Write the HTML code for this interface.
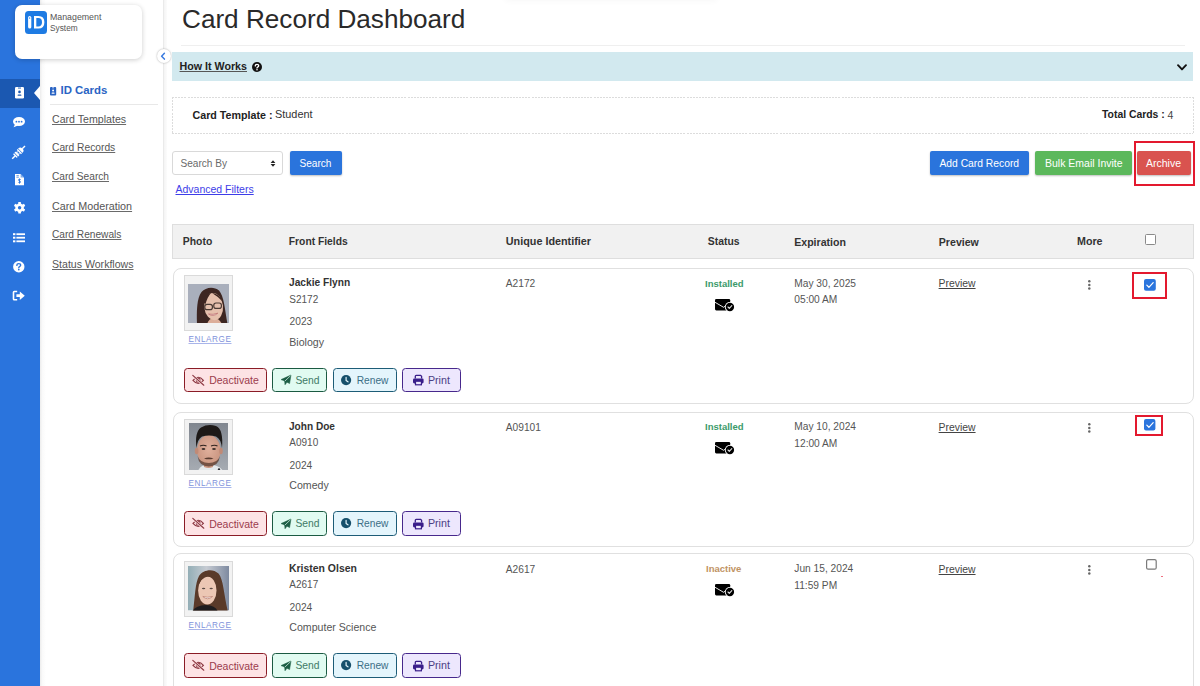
<!DOCTYPE html>
<html><head><meta charset="utf-8"><style>
*{box-sizing:border-box;margin:0;padding:0}
html,body{width:1200px;height:686px;overflow:hidden;background:#fff;font-family:"Liberation Sans",sans-serif;color:#333}
.a{position:absolute}
.t{position:absolute;line-height:1;white-space:nowrap;text-decoration-skip-ink:none}
svg{position:absolute;overflow:visible}
</style></head><body>
<div class="a" style="left:40px;top:0px;width:6px;height:686px;background:linear-gradient(90deg,#ececec,#fafafa 40%,#fff)"></div>
<div class="a" style="left:0px;top:0px;width:40px;height:686px;background:#2a74dd"></div>
<div class="a" style="left:0px;top:79px;width:40px;height:29px;background:#1b58b1"></div>
<div class="a" style="left:34px;top:86px;width:0;height:0;border-top:7px solid transparent;border-bottom:7px solid transparent;border-right:6px solid #fff"></div>
<svg style="left:14.8px;top:86.8px" width="9" height="11.5" viewBox="0 0 9 11.5"><rect x="0" y="0" width="9" height="11.5" rx="1.2" fill="#fff"/><rect x="3" y="0.6" width="3" height="0.9" fill="#1b58b1"/><circle cx="4.5" cy="4.9" r="1.3" fill="#1b58b1"/><rect x="2.6" y="7.4" width="3.8" height="1.4" rx="0.6" fill="#1b58b1"/></svg>
<svg style="left:13px;top:116.5px" width="12" height="10.5" viewBox="0 0 12 10.5"><ellipse cx="6" cy="4.5" rx="6" ry="4.5" fill="#fff"/><path d="M2.2 7 L0.6 10.3 L5 8.6Z" fill="#fff"/><circle cx="3.4" cy="4.7" r="0.9" fill="#2a74dd"/><circle cx="6" cy="4.7" r="0.9" fill="#2a74dd"/><circle cx="8.6" cy="4.7" r="0.9" fill="#2a74dd"/></svg>
<svg style="left:12.4px;top:144.8px" width="14" height="14" viewBox="0 0 14 14"><g transform="rotate(-45 7 7)"><rect x="-2.6" y="6.3" width="4" height="1.4" fill="#fff"/><rect x="1.2" y="4.4" width="4" height="5.2" rx="0.6" fill="#fff"/><rect x="2.6" y="4.4" width="0.7" height="5.2" fill="#2a74dd"/><rect x="5.2" y="5.3" width="1.2" height="1" fill="#fff"/><rect x="5.2" y="7.7" width="1.2" height="1" fill="#fff"/><path d="M6.8 4 H9.6 Q11.8 4 11.8 7 Q11.8 10 9.6 10 H6.8Z" fill="#fff"/><rect x="8.2" y="4" width="0.6" height="6" fill="#2a74dd"/><rect x="11.5" y="6.3" width="4" height="1.4" fill="#fff"/></g></svg>
<svg style="left:14.8px;top:174px" width="9" height="11.3" viewBox="0 0 9 11.3"><path d="M0 0 H5.6 L9 3.4 V11.3 H0Z" fill="#fff"/><path d="M5.6 0 V3.4 H9" fill="#2a74dd" opacity="0.6"/><rect x="1.4" y="1.4" width="2.4" height="0.7" fill="#2a74dd"/><rect x="1.4" y="2.8" width="2.4" height="0.7" fill="#2a74dd"/><path d="M5.7 5.6 Q4.5 5 3.6 5.6 Q3 6.3 4.3 6.9 Q5.8 7.4 5.5 8.3 Q4.8 9 3.4 8.4 M4.5 4.6 V9.6" fill="none" stroke="#2a74dd" stroke-width="0.9"/></svg>
<svg style="left:13.5px;top:202.4px" width="11.2" height="11.4" viewBox="0 0 11.2 11.4"><rect x="4.25" y="-0.1" width="2.7" height="3" rx="0.5" fill="#fff" transform="rotate(0 5.6 5.7)"/><rect x="4.25" y="-0.1" width="2.7" height="3" rx="0.5" fill="#fff" transform="rotate(60 5.6 5.7)"/><rect x="4.25" y="-0.1" width="2.7" height="3" rx="0.5" fill="#fff" transform="rotate(120 5.6 5.7)"/><rect x="4.25" y="-0.1" width="2.7" height="3" rx="0.5" fill="#fff" transform="rotate(180 5.6 5.7)"/><rect x="4.25" y="-0.1" width="2.7" height="3" rx="0.5" fill="#fff" transform="rotate(240 5.6 5.7)"/><rect x="4.25" y="-0.1" width="2.7" height="3" rx="0.5" fill="#fff" transform="rotate(300 5.6 5.7)"/><circle cx="5.6" cy="5.7" r="4.3" fill="#fff"/><circle cx="5.6" cy="5.7" r="1.7" fill="#2a74dd"/></svg>
<svg style="left:13px;top:233px" width="12" height="9.5" viewBox="0 0 12 9.5"><rect x="0" y="0.2" width="2.4" height="2" fill="#fff"/><rect x="0" y="3.7" width="2.4" height="2" fill="#fff"/><rect x="0" y="7.3" width="2.4" height="2" fill="#fff"/><rect x="3.4" y="0.3" width="8.6" height="1.8" fill="#fff"/><rect x="3.4" y="3.8" width="8.6" height="1.8" fill="#fff"/><rect x="3.4" y="7.4" width="8.6" height="1.8" fill="#fff"/></svg>
<svg style="left:13.2px;top:261px" width="11.6" height="11.4" viewBox="0 0 11.6 11.4"><circle cx="5.8" cy="5.7" r="5.7" fill="#fff"/><path d="M3.9 4.4 Q3.9 2.6 5.8 2.6 Q7.7 2.6 7.7 4.1 Q7.7 5.1 6.5 5.6 Q5.8 5.9 5.8 6.8" fill="none" stroke="#2a74dd" stroke-width="1.4" stroke-linecap="round"/><circle cx="5.8" cy="8.6" r="0.85" fill="#2a74dd"/></svg>
<svg style="left:13.2px;top:290.9px" width="11.8" height="9.3" viewBox="0 0 11.8 9.3"><path d="M4.2 0.5 H1.2 Q0.5 0.5 0.5 1.2 V8.1 Q0.5 8.8 1.2 8.8 H4.2" fill="none" stroke="#fff" stroke-width="1.6"/><path d="M3.4 3.2 H6.8 V0.4 L11.8 4.65 L6.8 8.9 V6.1 H3.4Z" fill="#fff"/></svg>
<div class="a" style="left:163px;top:0px;width:1px;height:686px;background:#eaeaea"></div>
<div class="a" style="left:164px;top:0px;width:3px;height:686px;background:linear-gradient(90deg,#f4f4f4,#fcfcfc)"></div>
<div class="a" style="left:14.5px;top:5px;width:127.8px;height:53.8px;background:#fff;border-radius:7px;box-shadow:0 1px 5px rgba(0,0,0,.2)"></div>
<div class="a" style="left:24.9px;top:11.4px;width:22.3px;height:22.5px;background:#1e7be3;border-radius:3.5px"></div>
<svg style="left:24.9px;top:11.4px" width="22.3" height="22.5" viewBox="0 0 22.3 22.5"><rect x="3.1" y="4.9" width="3.2" height="12.7" rx="1.6" fill="#fff"/><rect x="4.2" y="6.2" width="1" height="1.6" rx="0.5" fill="#1e7be3"/><path d="M9 4.9 H13.4 Q19.4 4.9 19.4 11.25 Q19.4 17.6 13.4 17.6 H9Z M11.3 7.1 V15.4 H13.3 Q17 15.4 17 11.25 Q17 7.1 13.3 7.1Z" fill="#fff" fill-rule="evenodd"/></svg>
<div class="t" style="left:50.00px;top:13.15px;font-size:8.8px;font-weight:400;color:#555;">Management</div>
<div class="t" style="left:50.00px;top:24.07px;font-size:8.3px;font-weight:400;color:#555;">System</div>
<div class="t" style="left:60.50px;top:85.15px;font-size:11.4px;font-weight:700;color:#2a64c4;">ID Cards</div>
<svg style="left:50px;top:86.5px" width="6.2" height="8.5" viewBox="0 0 6.2 8.5"><rect x="0" y="0" width="6.2" height="8.5" rx="0.9" fill="#2a64c4"/><rect x="2.1" y="0.5" width="2" height="0.7" fill="#fff"/><circle cx="3.1" cy="3.6" r="1" fill="#fff"/><rect x="1.6" y="5.5" width="3" height="1.3" rx="0.5" fill="#fff"/></svg>
<div class="a" style="left:50px;top:104px;width:108px;height:1px;background:#e8e8e8"></div>
<div class="t" style="left:52.00px;top:114.01px;font-size:10.62px;font-weight:400;color:#555;text-decoration:underline;text-decoration-color:#6a6a6a">Card Templates</div>
<div class="t" style="left:52.00px;top:143.32px;font-size:10.25px;font-weight:400;color:#555;text-decoration:underline;text-decoration-color:#6a6a6a">Card Records</div>
<div class="t" style="left:52.00px;top:172.39px;font-size:10.17px;font-weight:400;color:#555;text-decoration:underline;text-decoration-color:#6a6a6a">Card Search</div>
<div class="t" style="left:52.00px;top:200.89px;font-size:10.76px;font-weight:400;color:#555;text-decoration:underline;text-decoration-color:#6a6a6a">Card Moderation</div>
<div class="t" style="left:52.00px;top:230.39px;font-size:10.17px;font-weight:400;color:#555;text-decoration:underline;text-decoration-color:#6a6a6a">Card Renewals</div>
<div class="t" style="left:52.00px;top:259.04px;font-size:10.58px;font-weight:400;color:#555;text-decoration:underline;text-decoration-color:#6a6a6a">Status Workflows</div>
<div class="a" style="left:156.5px;top:49px;width:14px;height:14px;background:#fff;border-radius:50%;box-shadow:0 0 2px rgba(0,0,0,.35)"></div>
<svg style="left:159px;top:52px" width="8" height="8" viewBox="0 0 8 8"><path d="M5.4 1.3 L2.6 4.2 L5.4 7.1" fill="none" stroke="#3a7be0" stroke-width="1.5" stroke-linecap="round" stroke-linejoin="round"/></svg>
<div class="t" style="left:182.00px;top:5.86px;font-size:26.15px;font-weight:400;color:#2a2a2a;">Card Record Dashboard</div>
<div class="a" style="left:505px;top:-20px;width:212px;height:20px;box-shadow:0 1px 6px rgba(0,0,0,.035);background:#fff"></div>
<div class="a" style="left:181px;top:45px;width:1004px;height:1px;background:#efefef"></div>
<div class="a" style="left:172px;top:52px;width:1021px;height:29px;background:#d2e9ef"></div>
<div class="t" style="left:179.50px;top:60.94px;font-size:10.7px;font-weight:700;color:#222;text-decoration:underline;text-decoration-color:#555">How It Works</div>
<svg style="left:252px;top:61.5px" width="10" height="10" viewBox="0 0 10 10"><circle cx="5" cy="5" r="5" fill="#111"/><path d="M3.3 3.9 Q3.3 2.3 5 2.3 Q6.7 2.3 6.7 3.7 Q6.7 4.6 5.6 5.1 Q5 5.4 5 6.1" fill="none" stroke="#fff" stroke-width="1.3" stroke-linecap="round"/><circle cx="5" cy="7.8" r="0.8" fill="#fff"/></svg>
<svg style="left:1177px;top:64px" width="10" height="7" viewBox="0 0 10 7"><path d="M1 1.2 L5 5.4 L9 1.2" fill="none" stroke="#111" stroke-width="1.9" stroke-linecap="round" stroke-linejoin="round"/></svg>
<div class="a" style="left:172px;top:96.5px;width:1021px;height:1px;background:repeating-linear-gradient(90deg,#dcdcdc 0 2px,transparent 2px 3.1px)"></div>
<div class="a" style="left:172px;top:133.2px;width:1021px;height:1px;background:repeating-linear-gradient(90deg,#dcdcdc 0 2px,transparent 2px 3.1px)"></div>
<div class="a" style="left:172px;top:96.5px;width:1px;height:37.7px;background:repeating-linear-gradient(180deg,#dcdcdc 0 2px,transparent 2px 3.1px)"></div>
<div class="a" style="left:1192.5px;top:96.5px;width:1px;height:37.7px;background:repeating-linear-gradient(180deg,#dcdcdc 0 2px,transparent 2px 3.1px)"></div>
<div class="t" style="left:192.50px;top:109.64px;font-size:10.7px;font-weight:700;color:#222;">Card Template :</div>
<div class="t" style="left:275.00px;top:109.47px;font-size:10.9px;font-weight:400;color:#333;">Student</div>
<div class="t" style="left:1102.00px;top:109.90px;font-size:10.4px;font-weight:700;color:#222;">Total Cards :</div>
<div class="t" style="left:1167.50px;top:109.81px;font-size:10.5px;font-weight:400;color:#444;">4</div>
<div class="a" style="left:172px;top:151px;width:111px;height:24px;border:1px solid #d9d9d9;border-radius:3px;background:#fff"></div>
<div class="t" style="left:180.50px;top:159.25px;font-size:10.1px;font-weight:400;color:#6a6a6a;">Search By</div>
<svg style="left:270px;top:159.6px" width="6" height="7" viewBox="0 0 6 7"><path d="M0.6 2.9 L3 0.3 L5.4 2.9Z M0.6 4.1 L3 6.7 L5.4 4.1Z" fill="#222"/></svg>
<div class="a" style="left:290px;top:151px;width:51.5px;height:24px;background:#2a74dc;border-radius:2px;box-shadow:0 1px 2px rgba(0,0,0,.25)"></div>
<div class="t" style="left:299.50px;top:159.25px;font-size:10.1px;font-weight:400;color:#fff;">Search</div>
<div class="t" style="left:175.50px;top:184.31px;font-size:10.5px;font-weight:400;color:#3d3de8;text-decoration:underline">Advanced Filters</div>
<div class="a" style="left:930px;top:151px;width:99px;height:24px;background:#2a74dc;border-radius:2px;box-shadow:0 1px 2px rgba(0,0,0,.25)"></div>
<div class="t" style="left:939.50px;top:159.08px;font-size:10.3px;font-weight:400;color:#fff;">Add Card Record</div>
<div class="a" style="left:1035px;top:151px;width:97px;height:24px;background:#5cb85c;border-radius:2px;box-shadow:0 1px 2px rgba(0,0,0,.25)"></div>
<div class="t" style="left:1045.00px;top:158.11px;font-size:10.5px;font-weight:400;color:#fff;">Bulk Email Invite</div>
<div class="a" style="left:1137px;top:151px;width:54px;height:24px;background:#d9534f;border-radius:2px;box-shadow:0 1px 2px rgba(0,0,0,.25)"></div>
<div class="t" style="left:1146.00px;top:158.11px;font-size:10.5px;font-weight:400;color:#fff;">Archive</div>
<div class="a" style="left:1133.5px;top:141px;width:61.5px;height:44.5px;border:2px solid #e3192e"></div>
<div class="a" style="left:172.15px;top:224.3px;width:1021.85px;height:34.4px;background:#f1f1f1;border:1px solid #dedede"></div>
<div class="t" style="left:182.80px;top:236.70px;font-size:10.4px;font-weight:700;color:#333;">Photo</div>
<div class="t" style="left:288.80px;top:236.78px;font-size:10.3px;font-weight:700;color:#333;">Front Fields</div>
<div class="t" style="left:505.80px;top:236.36px;font-size:10.8px;font-weight:700;color:#333;">Unique Identifier</div>
<div class="t" style="left:707.80px;top:236.70px;font-size:10.4px;font-weight:700;color:#333;">Status</div>
<div class="t" style="left:794.20px;top:236.53px;font-size:10.6px;font-weight:700;color:#333;">Expiration</div>
<div class="t" style="left:938.80px;top:236.53px;font-size:10.6px;font-weight:700;color:#333;">Preview</div>
<div class="t" style="left:1077.00px;top:236.44px;font-size:10.7px;font-weight:700;color:#333;">More</div>
<div class="a" style="left:1144.7px;top:234px;width:11.6px;height:11.3px;border:1.1px solid #8a8a8a;border-radius:1.5px;background:#fff"></div>
<div class="a" style="left:173.06px;top:268.26px;width:1020.94px;height:135.84000000000003px;border:1px solid #e0e0e0;border-radius:8px;background:#fff"></div>
<div class="a" style="left:184px;top:275.3px;width:49px;height:56px;background:#f2f2f2;border:1px solid #dadada"></div>
<svg style="left:188px;top:283.8px" width="41" height="39" viewBox="0 0 41 39"><defs><filter id="bj" x="-10%" y="-10%" width="120%" height="120%"><feGaussianBlur stdDeviation="0.7"/></filter><clipPath id="cj"><rect width="41" height="39"/></clipPath></defs>
<g clip-path="url(#cj)">
<rect width="41" height="39" fill="#a9afbc"/>
<g filter="url(#bj)">
<path d="M9 40 C8.5 26 9 14 13.5 8 C17.5 3 26 2 31 6.5 C36 12 37 26 39.5 40 Z" fill="#3e2722"/>
<path d="M19 40 Q21 34 26 34 Q31 34 34 40Z" fill="#dcae9a"/>
<ellipse cx="25.6" cy="22.6" rx="9.4" ry="13.6" fill="#e6c0ad" transform="rotate(-6 25.6 22.6)"/>
<path d="M15.8 19 Q16 10.5 23 9 Q19.5 13 17.5 20Z" fill="#3e2722"/>
<path d="M24 9 Q31.5 9.5 34.5 17.5 Q30 12.5 24 9Z" fill="#3e2722"/>
<rect x="16.8" y="20.3" width="7.6" height="5.4" rx="2.2" fill="none" stroke="#4a3a34" stroke-width="1.2"/>
<rect x="25.8" y="19.0" width="7.6" height="5.4" rx="2.2" fill="none" stroke="#4a3a34" stroke-width="1.2"/>
<path d="M20.5 30 Q25 33.2 29.8 29.2 Q25 31 20.5 30Z" fill="#f6e6e4" stroke="#c07373" stroke-width="0.8"/>
</g></g></svg>
<div class="t" style="left:188.50px;top:336.26px;font-size:8.2px;font-weight:400;color:#8193db;text-decoration:underline;text-decoration-color:#a9b5ea;letter-spacing:0.55px">ENLARGE</div>
<div class="t" style="left:289.00px;top:278.37px;font-size:10.2px;font-weight:700;color:#333;">Jackie Flynn</div>
<div class="t" style="left:289.30px;top:294.54px;font-size:10.0px;font-weight:400;color:#555;">S2172</div>
<div class="t" style="left:289.60px;top:317.27px;font-size:10.2px;font-weight:400;color:#555;">2023</div>
<div class="t" style="left:289.30px;top:336.63px;font-size:10.6px;font-weight:400;color:#555;">Biology</div>
<div class="t" style="left:505.80px;top:279.27px;font-size:10.2px;font-weight:400;color:#555;">A2172</div>
<div class="t" style="left:705.00px;top:278.71px;font-size:9.5px;font-weight:700;color:#3c9b6b;">Installed</div>
<svg style="left:714.7px;top:298.7px" width="20" height="13" viewBox="0 0 20 13"><rect x="0" y="0" width="15.2" height="11.4" rx="1.3" fill="#000"/>
<path d="M-0.3 3.1 L8.6 8.3 L15.5 3.1" fill="none" stroke="#fff" stroke-width="0.9"/>
<circle cx="14.9" cy="8.0" r="5.1" fill="#fff"/>
<circle cx="14.9" cy="8.0" r="4.2" fill="#000"/>
<path d="M13.0 8.0 L14.3 9.3 L16.8 6.7" fill="none" stroke="#ddd" stroke-width="1.1" stroke-linecap="round" stroke-linejoin="round"/></svg>
<div class="t" style="left:794.30px;top:278.57px;font-size:10.2px;font-weight:400;color:#555;">May 30, 2025</div>
<div class="t" style="left:794.30px;top:295.07px;font-size:10.2px;font-weight:400;color:#555;">05:00 AM</div>
<div class="t" style="left:938.60px;top:279.40px;font-size:10.4px;font-weight:400;color:#444;text-decoration:underline">Preview</div>
<svg style="left:1087.7px;top:279.6px" width="2.6" height="9.8" viewBox="0 0 2.6 9.8"><circle cx="1.3" cy="1.3" r="1.25" fill="#666"/><circle cx="1.3" cy="4.9" r="1.25" fill="#666"/><circle cx="1.3" cy="8.5" r="1.25" fill="#666"/></svg>
<div class="a" style="left:183.75px;top:367.6px;width:83.2px;height:24.4px;background:#fde3e5;border:1.6px solid #8a1c26;border-radius:3.5px"></div>
<svg style="left:192px;top:374.5px" width="12.5" height="10.5" viewBox="0 0 12.5 10.5"><path d="M1 5.3 Q6.2 -0.8 11.4 5.3 Q6.2 11.4 1 5.3Z" fill="none" stroke="#8e3a44" stroke-width="1.2"/>
<circle cx="6.2" cy="5.3" r="1.9" fill="none" stroke="#8e3a44" stroke-width="1.1"/>
<path d="M0.8 0.6 L11.6 10" stroke="#fde3e5" stroke-width="2.4"/>
<path d="M0.8 0.4 L11.8 10.2" stroke="#8e3a44" stroke-width="1.2" stroke-linecap="round"/></svg>
<div class="t" style="left:209.20px;top:375.01px;font-size:10.5px;font-weight:400;color:#9b3b4c;">Deactivate</div>
<div class="a" style="left:272.25px;top:367.6px;width:54.7px;height:24.4px;background:#e1fbf1;border:1.6px solid #1b5a42;border-radius:3.5px"></div>
<svg style="left:280.6px;top:375px" width="10" height="10" viewBox="0 0 10 10"><path d="M10 0 L0 4.6 L3.6 6 L4 9.8 L6 7.2 L8.6 8.6Z M10 0 L3.6 6" fill="#1d5e45" stroke="#1d5e45" stroke-width="0.5" stroke-linejoin="round"/><path d="M9.6 0.6 L3.9 6.1" stroke="#e1fbf1" stroke-width="0.7"/></svg>
<div class="t" style="left:295.40px;top:375.78px;font-size:10.3px;font-weight:400;color:#3f7a66;">Send</div>
<div class="a" style="left:333.1px;top:367.6px;width:63.8px;height:24.4px;background:#e4f5fc;border:1.6px solid #1d5c77;border-radius:3.5px"></div>
<svg style="left:341px;top:374.8px" width="10.2" height="10.2" viewBox="0 0 10.2 10.2"><circle cx="5.1" cy="5.1" r="5.1" fill="#154f6b"/><path d="M5.1 2.4 V5.4 L7 6.8" fill="none" stroke="#e4f5fc" stroke-width="1.2" stroke-linecap="round" stroke-linejoin="round"/></svg>
<div class="t" style="left:356.70px;top:375.87px;font-size:10.2px;font-weight:400;color:#3b6e86;">Renew</div>
<div class="a" style="left:401.9px;top:367.6px;width:59.6px;height:24.4px;background:#ede7fd;border:1.6px solid #47288c;border-radius:3.5px"></div>
<svg style="left:412.5px;top:375px" width="10.6" height="10.3" viewBox="0 0 10.6 10.3"><path d="M2.3 3.6 V1.2 Q2.3 0.3 3.2 0.3 H7.6 L8.6 1.3 V3.6" fill="none" stroke="#3a1e8a" stroke-width="1.3"/>
<rect x="0" y="3.4" width="10.6" height="5" rx="1.3" fill="#3a1e8a"/>
<rect x="2.5" y="6.2" width="5.9" height="3.6" fill="#ede7fd" stroke="#3a1e8a" stroke-width="1.2"/></svg>
<div class="t" style="left:427.90px;top:374.84px;font-size:10.7px;font-weight:400;color:#4b3e84;">Print</div>
<div class="a" style="left:1132px;top:272.2px;width:34.7px;height:27.2px;border:2px solid #e3192e"></div>
<svg style="left:1143.8px;top:279.2px" width="11.8" height="11.8" viewBox="0 0 11.8 11.8"><rect x="0" y="0" width="11.8" height="11.8" rx="2" fill="#2b75dd"/><path d="M2.8 6.2 L4.9 8.3 L9.2 3.6" fill="none" stroke="#fff" stroke-width="1.2" stroke-linecap="round" stroke-linejoin="round"/></svg>
<div class="a" style="left:173.06px;top:412.35px;width:1020.94px;height:134.70999999999992px;border:1px solid #e0e0e0;border-radius:8px;background:#fff"></div>
<div class="a" style="left:184px;top:418.9px;width:49px;height:56px;background:#f2f2f2;border:1px solid #dadada"></div>
<svg style="left:189px;top:422.9px" width="39" height="47" viewBox="0 0 39 47"><defs><linearGradient id="gn" x1="0" y1="0" x2="0" y2="1"><stop offset="0" stop-color="#80868f"/><stop offset="1" stop-color="#a6abb2"/></linearGradient><radialGradient id="fn" cx="0.5" cy="0.45" r="0.6"><stop offset="0" stop-color="#e0b09c"/><stop offset="1" stop-color="#c8937e"/></radialGradient><clipPath id="cn"><rect width="39" height="47"/></clipPath></defs>
<g clip-path="url(#cn)">
<rect width="39" height="47" fill="url(#gn)"/>
<path d="M9 48 Q11 42 19.5 41.5 Q30 41.5 34 48Z" fill="#e4e8eb"/>
<path d="M15 44 Q19.5 46 24 44 L24 38 L15 38Z" fill="#c99580"/>
<ellipse cx="19.8" cy="27.5" rx="11.6" ry="15.5" fill="url(#fn)"/>
<ellipse cx="7.6" cy="28" rx="1.8" ry="3.2" fill="#c08a76"/><ellipse cx="32" cy="28" rx="1.8" ry="3.2" fill="#c08a76"/>
<path d="M7.5 25 Q5.5 9 12 4.5 Q19 0.5 27 3 Q34.5 6 33 25 Q32 16 27 13.5 Q20 11.5 13 13.5 Q8.5 16 7.5 25Z" fill="#1d1917"/>
<path d="M8.5 33 Q10 43.5 19.8 43.5 Q29.5 43.5 31 33 Q28.5 40 19.8 40 Q11 40 8.5 33Z" fill="#5e4034" opacity="0.8"/>
<path d="M15 35.5 Q19.8 33.5 24.5 35.5 Q19.8 37.2 15 35.5Z" fill="#5a3c30"/>
<ellipse cx="14.5" cy="26" rx="1.9" ry="0.9" fill="#3e302b"/><ellipse cx="25" cy="26" rx="1.9" ry="0.9" fill="#3e302b"/>
<path d="M11 23 Q14.5 21.5 17.5 23 M22 23 Q25.5 21.5 28.5 23" stroke="#2e221e" stroke-width="1.1" fill="none"/>
<circle cx="30" cy="46.5" r="1.2" fill="#2a2a30"/>
</g></svg>
<div class="t" style="left:188.50px;top:479.86px;font-size:8.2px;font-weight:400;color:#8193db;text-decoration:underline;text-decoration-color:#a9b5ea;letter-spacing:0.55px">ENLARGE</div>
<div class="t" style="left:289.00px;top:422.05px;font-size:10.1px;font-weight:700;color:#333;">John Doe</div>
<div class="t" style="left:289.30px;top:438.14px;font-size:10.0px;font-weight:400;color:#555;">A0910</div>
<div class="t" style="left:289.60px;top:460.87px;font-size:10.2px;font-weight:400;color:#555;">2024</div>
<div class="t" style="left:289.30px;top:480.23px;font-size:10.6px;font-weight:400;color:#555;">Comedy</div>
<div class="t" style="left:505.80px;top:422.87px;font-size:10.2px;font-weight:400;color:#555;">A09101</div>
<div class="t" style="left:705.00px;top:422.31px;font-size:9.5px;font-weight:700;color:#3c9b6b;">Installed</div>
<svg style="left:714.7px;top:442.29999999999995px" width="20" height="13" viewBox="0 0 20 13"><rect x="0" y="0" width="15.2" height="11.4" rx="1.3" fill="#000"/>
<path d="M-0.3 3.1 L8.6 8.3 L15.5 3.1" fill="none" stroke="#fff" stroke-width="0.9"/>
<circle cx="14.9" cy="8.0" r="5.1" fill="#fff"/>
<circle cx="14.9" cy="8.0" r="4.2" fill="#000"/>
<path d="M13.0 8.0 L14.3 9.3 L16.8 6.7" fill="none" stroke="#ddd" stroke-width="1.1" stroke-linecap="round" stroke-linejoin="round"/></svg>
<div class="t" style="left:794.30px;top:422.17px;font-size:10.2px;font-weight:400;color:#555;">May 10, 2024</div>
<div class="t" style="left:794.30px;top:438.67px;font-size:10.2px;font-weight:400;color:#555;">12:00 AM</div>
<div class="t" style="left:938.60px;top:423.00px;font-size:10.4px;font-weight:400;color:#444;text-decoration:underline">Preview</div>
<svg style="left:1087.7px;top:423.20000000000005px" width="2.6" height="9.8" viewBox="0 0 2.6 9.8"><circle cx="1.3" cy="1.3" r="1.25" fill="#666"/><circle cx="1.3" cy="4.9" r="1.25" fill="#666"/><circle cx="1.3" cy="8.5" r="1.25" fill="#666"/></svg>
<div class="a" style="left:183.75px;top:511.20000000000005px;width:83.2px;height:24.4px;background:#fde3e5;border:1.6px solid #8a1c26;border-radius:3.5px"></div>
<svg style="left:192px;top:518.1px" width="12.5" height="10.5" viewBox="0 0 12.5 10.5"><path d="M1 5.3 Q6.2 -0.8 11.4 5.3 Q6.2 11.4 1 5.3Z" fill="none" stroke="#8e3a44" stroke-width="1.2"/>
<circle cx="6.2" cy="5.3" r="1.9" fill="none" stroke="#8e3a44" stroke-width="1.1"/>
<path d="M0.8 0.6 L11.6 10" stroke="#fde3e5" stroke-width="2.4"/>
<path d="M0.8 0.4 L11.8 10.2" stroke="#8e3a44" stroke-width="1.2" stroke-linecap="round"/></svg>
<div class="t" style="left:209.20px;top:518.61px;font-size:10.5px;font-weight:400;color:#9b3b4c;">Deactivate</div>
<div class="a" style="left:272.25px;top:511.20000000000005px;width:54.7px;height:24.4px;background:#e1fbf1;border:1.6px solid #1b5a42;border-radius:3.5px"></div>
<svg style="left:280.6px;top:518.6px" width="10" height="10" viewBox="0 0 10 10"><path d="M10 0 L0 4.6 L3.6 6 L4 9.8 L6 7.2 L8.6 8.6Z M10 0 L3.6 6" fill="#1d5e45" stroke="#1d5e45" stroke-width="0.5" stroke-linejoin="round"/><path d="M9.6 0.6 L3.9 6.1" stroke="#e1fbf1" stroke-width="0.7"/></svg>
<div class="t" style="left:295.40px;top:519.38px;font-size:10.3px;font-weight:400;color:#3f7a66;">Send</div>
<div class="a" style="left:333.1px;top:511.20000000000005px;width:63.8px;height:24.4px;background:#e4f5fc;border:1.6px solid #1d5c77;border-radius:3.5px"></div>
<svg style="left:341px;top:518.4px" width="10.2" height="10.2" viewBox="0 0 10.2 10.2"><circle cx="5.1" cy="5.1" r="5.1" fill="#154f6b"/><path d="M5.1 2.4 V5.4 L7 6.8" fill="none" stroke="#e4f5fc" stroke-width="1.2" stroke-linecap="round" stroke-linejoin="round"/></svg>
<div class="t" style="left:356.70px;top:519.47px;font-size:10.2px;font-weight:400;color:#3b6e86;">Renew</div>
<div class="a" style="left:401.9px;top:511.20000000000005px;width:59.6px;height:24.4px;background:#ede7fd;border:1.6px solid #47288c;border-radius:3.5px"></div>
<svg style="left:412.5px;top:518.6px" width="10.6" height="10.3" viewBox="0 0 10.6 10.3"><path d="M2.3 3.6 V1.2 Q2.3 0.3 3.2 0.3 H7.6 L8.6 1.3 V3.6" fill="none" stroke="#3a1e8a" stroke-width="1.3"/>
<rect x="0" y="3.4" width="10.6" height="5" rx="1.3" fill="#3a1e8a"/>
<rect x="2.5" y="6.2" width="5.9" height="3.6" fill="#ede7fd" stroke="#3a1e8a" stroke-width="1.2"/></svg>
<div class="t" style="left:427.90px;top:518.44px;font-size:10.7px;font-weight:400;color:#4b3e84;">Print</div>
<div class="a" style="left:1135px;top:415px;width:27.9px;height:20.8px;border:2px solid #e3192e"></div>
<svg style="left:1144px;top:418.75px" width="11.4" height="11.4" viewBox="0 0 11.4 11.4"><rect x="0" y="0" width="11.4" height="11.4" rx="2" fill="#2b75dd"/><path d="M2.8 6.2 L4.9 8.3 L9.2 3.6" fill="none" stroke="#fff" stroke-width="1.2" stroke-linecap="round" stroke-linejoin="round"/></svg>
<div class="a" style="left:173.06px;top:553.35px;width:1020.94px;height:146.64999999999998px;border:1px solid #e0e0e0;border-radius:8px;background:#fff"></div>
<div class="a" style="left:184px;top:560.9000000000001px;width:49px;height:56px;background:#f2f2f2;border:1px solid #dadada"></div>
<svg style="left:188px;top:566.3px" width="41" height="44.5" viewBox="0 0 41 44.5"><defs><linearGradient id="gk" x1="0" y1="0" x2="1" y2="0"><stop offset="0" stop-color="#93aeb6"/><stop offset="0.45" stop-color="#c6cbd2"/><stop offset="1" stop-color="#7e8aa0"/></linearGradient><clipPath id="ck"><rect width="41" height="44.5"/></clipPath></defs>
<g clip-path="url(#ck)">
<rect width="41" height="44.5" fill="url(#gk)"/>
<path d="M5 46 C7 32 7 17 11 10 C15 3.5 25 2 30.5 7.5 C35.5 13 36 30 40 46 Z" fill="#5a3a29"/>
<path d="M4 46 Q7 39.5 18 39 Q28 39.5 30 46Z" fill="#1e1c1e"/>
<ellipse cx="19.3" cy="24.5" rx="9.2" ry="14" fill="#ecc7b4"/>
<path d="M10 21 Q10.5 8.5 19 7 Q29 6.5 30.5 19 Q27 11 20 10.5 Q13 11.5 10 21Z" fill="#5a3a29"/>
<path d="M14.8 30.5 Q19.5 35 24.5 30.5 Q19.5 32 14.8 30.5Z" fill="#fff" stroke="#b8786c" stroke-width="0.7"/>
<ellipse cx="15.6" cy="22.5" rx="1.7" ry="0.8" fill="#5a4a44"/><ellipse cx="23.2" cy="22.5" rx="1.7" ry="0.8" fill="#5a4a44"/>
</g></svg>
<div class="t" style="left:188.50px;top:621.86px;font-size:8.2px;font-weight:400;color:#8193db;text-decoration:underline;text-decoration-color:#a9b5ea;letter-spacing:0.55px">ENLARGE</div>
<div class="t" style="left:289.00px;top:563.75px;font-size:10.45px;font-weight:700;color:#333;">Kristen Olsen</div>
<div class="t" style="left:289.30px;top:580.13px;font-size:10.0px;font-weight:400;color:#555;">A2617</div>
<div class="t" style="left:289.60px;top:602.87px;font-size:10.2px;font-weight:400;color:#555;">2024</div>
<div class="t" style="left:289.30px;top:622.23px;font-size:10.6px;font-weight:400;color:#555;">Computer Science</div>
<div class="t" style="left:505.80px;top:564.87px;font-size:10.2px;font-weight:400;color:#555;">A2617</div>
<div class="t" style="left:706.00px;top:564.31px;font-size:9.5px;font-weight:700;color:#bf9364;">Inactive</div>
<svg style="left:714.7px;top:584.3px" width="20" height="13" viewBox="0 0 20 13"><rect x="0" y="0" width="15.2" height="11.4" rx="1.3" fill="#000"/>
<path d="M-0.3 3.1 L8.6 8.3 L15.5 3.1" fill="none" stroke="#fff" stroke-width="0.9"/>
<circle cx="14.9" cy="8.0" r="5.1" fill="#fff"/>
<circle cx="14.9" cy="8.0" r="4.2" fill="#000"/>
<path d="M13.0 8.0 L14.3 9.3 L16.8 6.7" fill="none" stroke="#ddd" stroke-width="1.1" stroke-linecap="round" stroke-linejoin="round"/></svg>
<div class="t" style="left:794.30px;top:564.17px;font-size:10.2px;font-weight:400;color:#555;">Jun 15, 2024</div>
<div class="t" style="left:794.30px;top:580.67px;font-size:10.2px;font-weight:400;color:#555;">11:59 PM</div>
<div class="t" style="left:938.60px;top:565.00px;font-size:10.4px;font-weight:400;color:#444;text-decoration:underline">Preview</div>
<svg style="left:1087.7px;top:565.2px" width="2.6" height="9.8" viewBox="0 0 2.6 9.8"><circle cx="1.3" cy="1.3" r="1.25" fill="#666"/><circle cx="1.3" cy="4.9" r="1.25" fill="#666"/><circle cx="1.3" cy="8.5" r="1.25" fill="#666"/></svg>
<div class="a" style="left:183.75px;top:653.2px;width:83.2px;height:24.4px;background:#fde3e5;border:1.6px solid #8a1c26;border-radius:3.5px"></div>
<svg style="left:192px;top:660.1px" width="12.5" height="10.5" viewBox="0 0 12.5 10.5"><path d="M1 5.3 Q6.2 -0.8 11.4 5.3 Q6.2 11.4 1 5.3Z" fill="none" stroke="#8e3a44" stroke-width="1.2"/>
<circle cx="6.2" cy="5.3" r="1.9" fill="none" stroke="#8e3a44" stroke-width="1.1"/>
<path d="M0.8 0.6 L11.6 10" stroke="#fde3e5" stroke-width="2.4"/>
<path d="M0.8 0.4 L11.8 10.2" stroke="#8e3a44" stroke-width="1.2" stroke-linecap="round"/></svg>
<div class="t" style="left:209.20px;top:660.61px;font-size:10.5px;font-weight:400;color:#9b3b4c;">Deactivate</div>
<div class="a" style="left:272.25px;top:653.2px;width:54.7px;height:24.4px;background:#e1fbf1;border:1.6px solid #1b5a42;border-radius:3.5px"></div>
<svg style="left:280.6px;top:660.6px" width="10" height="10" viewBox="0 0 10 10"><path d="M10 0 L0 4.6 L3.6 6 L4 9.8 L6 7.2 L8.6 8.6Z M10 0 L3.6 6" fill="#1d5e45" stroke="#1d5e45" stroke-width="0.5" stroke-linejoin="round"/><path d="M9.6 0.6 L3.9 6.1" stroke="#e1fbf1" stroke-width="0.7"/></svg>
<div class="t" style="left:295.40px;top:661.38px;font-size:10.3px;font-weight:400;color:#3f7a66;">Send</div>
<div class="a" style="left:333.1px;top:653.2px;width:63.8px;height:24.4px;background:#e4f5fc;border:1.6px solid #1d5c77;border-radius:3.5px"></div>
<svg style="left:341px;top:660.4000000000001px" width="10.2" height="10.2" viewBox="0 0 10.2 10.2"><circle cx="5.1" cy="5.1" r="5.1" fill="#154f6b"/><path d="M5.1 2.4 V5.4 L7 6.8" fill="none" stroke="#e4f5fc" stroke-width="1.2" stroke-linecap="round" stroke-linejoin="round"/></svg>
<div class="t" style="left:356.70px;top:661.47px;font-size:10.2px;font-weight:400;color:#3b6e86;">Renew</div>
<div class="a" style="left:401.9px;top:653.2px;width:59.6px;height:24.4px;background:#ede7fd;border:1.6px solid #47288c;border-radius:3.5px"></div>
<svg style="left:412.5px;top:660.6px" width="10.6" height="10.3" viewBox="0 0 10.6 10.3"><path d="M2.3 3.6 V1.2 Q2.3 0.3 3.2 0.3 H7.6 L8.6 1.3 V3.6" fill="none" stroke="#3a1e8a" stroke-width="1.3"/>
<rect x="0" y="3.4" width="10.6" height="5" rx="1.3" fill="#3a1e8a"/>
<rect x="2.5" y="6.2" width="5.9" height="3.6" fill="#ede7fd" stroke="#3a1e8a" stroke-width="1.2"/></svg>
<div class="t" style="left:427.90px;top:660.44px;font-size:10.7px;font-weight:400;color:#4b3e84;">Print</div>
<svg style="left:1146.2px;top:559.2px" width="10.8" height="10.8" viewBox="0 0 10.8 10.8"><rect x="0.6" y="0.6" width="9.600000000000001" height="9.600000000000001" rx="1.5" fill="#fff" stroke="#7a7a7a" stroke-width="1.2"/></svg>
<div class="a" style="left:1161px;top:575.5px;width:1.5px;height:1.2px;background:#f07080"></div>
</body></html>
